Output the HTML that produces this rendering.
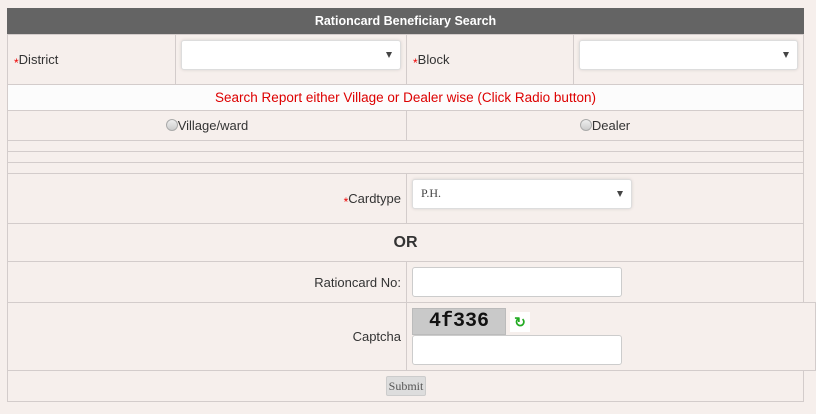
<!DOCTYPE html>
<html><head><style>
body{margin:0;width:816px;height:414px;background:#f6efec;font-family:"Liberation Sans",sans-serif;font-size:13px;color:#333;position:relative;overflow:hidden}
.a{position:absolute;box-sizing:border-box}
.b{border:1px solid #d3cccb}
.sel{background:#fff;border:1px solid #ddd;border-radius:3px;box-shadow:0 0 3px rgba(0,0,0,.12)}
.arr{position:absolute;right:8px;top:50%;margin-top:-3px;width:0;height:0;border-left:3px solid transparent;border-right:3px solid transparent;border-top:6px solid #444}
.inp{background:#fff;border:1px solid #ccc;border-radius:3px}
.st{color:#e00;font-size:12px;position:relative;top:3px}
.rad{display:inline-block;width:10px;height:10px;border-radius:50%;border:1px solid #aaa;background:linear-gradient(#eee,#ccc);vertical-align:-1px}
</style></head><body>
<div class="a" style="left:7px;top:8px;width:797px;height:26px;background:#646464;color:#fff;font-weight:bold;font-size:12.5px;text-align:center;line-height:26px">Rationcard Beneficiary Search</div>
<div class="a b" style="left:7px;top:34px;width:169px;height:51px;line-height:50px;padding-left:6px"><span class="st">*</span>District</div>
<div class="a b" style="left:175px;top:34px;width:232px;height:51px"></div>
<div class="a b" style="left:406px;top:34px;width:168px;height:51px;line-height:50px;padding-left:6px"><span class="st">*</span>Block</div>
<div class="a b" style="left:573px;top:34px;width:231px;height:51px"></div>
<div class="a sel" style="left:181px;top:40px;width:220px;height:30px"><div class="arr"></div></div>
<div class="a sel" style="left:579px;top:40px;width:219px;height:30px"><div class="arr"></div></div>
<div class="a b" style="left:7px;top:84px;width:797px;height:27px;background:#fcfcfc;color:#d00;text-align:center;line-height:26px;font-size:13.5px">Search Report either Village or Dealer wise (Click Radio button)</div>
<div class="a b" style="left:7px;top:110px;width:400px;height:31px;text-align:center;line-height:29px"><span class="rad"></span>Village/ward</div>
<div class="a b" style="left:406px;top:110px;width:398px;height:31px;text-align:center;line-height:29px"><span class="rad"></span>Dealer</div>
<div class="a b" style="left:7px;top:140px;width:797px;height:12px"></div>
<div class="a b" style="left:7px;top:151px;width:797px;height:12px"></div>
<div class="a b" style="left:7px;top:162px;width:797px;height:12px"></div>
<div class="a b" style="left:7px;top:173px;width:400px;height:51px;text-align:right;padding-right:5px;line-height:50px"><span class="st">*</span>Cardtype</div>
<div class="a b" style="left:406px;top:173px;width:398px;height:51px"></div>
<div class="a sel" style="left:412px;top:179px;width:220px;height:30px;font-family:'Liberation Serif',serif;font-size:12px;padding:6px 0 0 8px;color:#444">P.H.<div class="arr"></div></div>
<div class="a b" style="left:7px;top:223px;width:797px;height:39px;text-align:center;line-height:38px;font-size:16px;font-weight:bold;color:#333">OR</div>
<div class="a b" style="left:7px;top:261px;width:400px;height:42px;text-align:right;padding-right:5px;line-height:41px">Rationcard No:</div>
<div class="a b" style="left:406px;top:261px;width:398px;height:42px"></div>
<div class="a inp" style="left:412px;top:267px;width:210px;height:30px"></div>
<div class="a b" style="left:7px;top:302px;width:400px;height:69px;text-align:right;padding-right:5px;line-height:68px">Captcha</div>
<div class="a b" style="left:406px;top:302px;width:410px;height:69px"></div>
<div class="a" style="left:412px;top:308px;width:94px;height:27px;background:#c9c9c9;border:1px solid #bbb;font-family:'Liberation Mono',monospace;font-weight:bold;font-size:20px;color:#111;line-height:26px;text-align:center;letter-spacing:0px">4f336</div>
<div class="a" style="left:510px;top:312px;width:20px;height:20px;background:#fff;color:#2a2;font-weight:bold;font-size:14px;text-align:center;line-height:20px">↻</div>
<div class="a inp" style="left:412px;top:335px;width:210px;height:30px"></div>
<div class="a b" style="left:7px;top:370px;width:797px;height:32px"></div>
<div class="a" style="left:386px;top:376px;width:40px;height:20px;background:#ddd;border:1px solid #ccc;border-radius:2px;font-family:'Liberation Serif',serif;font-size:12px;color:#555;text-align:center;line-height:18px">Submit</div>
</body></html>
